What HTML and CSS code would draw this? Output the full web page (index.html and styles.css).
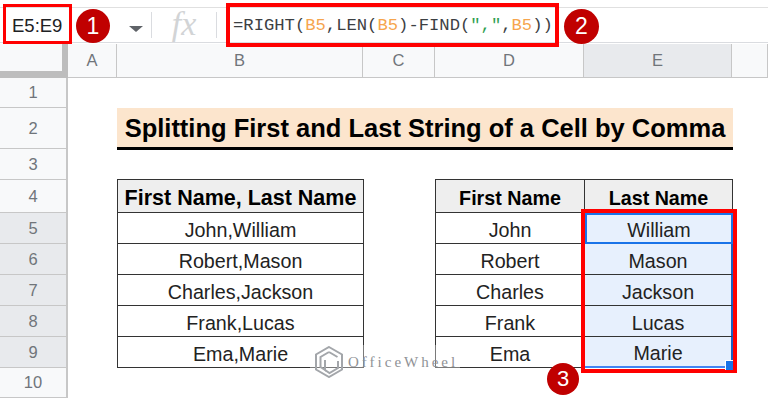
FILE: index.html
```html
<!DOCTYPE html>
<html lang="en">
<head>
    <meta charset="UTF-8">
    <meta name="viewport" content="width=device-width, initial-scale=1.0">
    <title>Splitting First and Last String of a Cell by Comma</title>
    <link rel="stylesheet" href="styles.css">
</head>
<body>
    <div class="formula-bar">
        <div class="name-box">E5:E9</div>
        <div class="name-arrow"></div>
        <div class="fx-box"><span class="fx">fx</span></div>
        <div class="formula">=RIGHT(<span class="ref">B5</span>,LEN(<span class="ref">B5</span>)-FIND(<span class="str">","</span>,<span class="ref">B5</span>))</div>
    </div>

    <div class="sheet">
        <div class="corner"></div>
        <div class="col-head">A</div>
        <div class="col-head">B</div>
        <div class="col-head">C</div>
        <div class="col-head">D</div>
        <div class="col-head active">E</div>
        <div class="col-head"></div>

        <div class="row-head r1">1</div>
        <div class="row-head r2">2</div>
        <div class="row-head r3">3</div>
        <div class="row-head r4">4</div>
        <div class="row-head r5 active">5</div>
        <div class="row-head r6 active">6</div>
        <div class="row-head r7 active">7</div>
        <div class="row-head r8 active">8</div>
        <div class="row-head r9 active">9</div>
        <div class="row-head r10">10</div>

        <div class="title">Splitting First and Last String of a Cell by Comma</div>

        <div class="table table-left">
            <div class="cell head wide">First Name, Last Name</div>
            <div class="cell">John,William</div>
            <div class="cell">Robert,Mason</div>
            <div class="cell">Charles,Jackson</div>
            <div class="cell">Frank,Lucas</div>
            <div class="cell">Ema,Marie</div>
        </div>

        <div class="table table-right">
            <div class="cell head">First Name</div>
            <div class="cell head">Last Name</div>
            <div class="cell">John</div>
            <div class="cell sel first">William</div>
            <div class="cell">Robert</div>
            <div class="cell sel">Mason</div>
            <div class="cell">Charles</div>
            <div class="cell sel">Jackson</div>
            <div class="cell">Frank</div>
            <div class="cell sel">Lucas</div>
            <div class="cell">Ema</div>
            <div class="cell sel last">Marie</div>
        </div>
    </div>

    <!-- annotations on top of the screenshot -->
    <div class="mark mark-name"></div>
    <div class="mark mark-formula"></div>
    <div class="mark mark-range"></div>
    <div class="handle"></div>
    <div class="badge badge-1">1</div>
    <div class="badge badge-2">2</div>
    <div class="badge badge-3">3</div>

    <div class="watermark">
        <svg class="wm-logo" width="30" height="32" viewBox="0 0 30 32" fill="none" stroke="#a3a6aa" stroke-width="2">
            <path d="M15 1 L28 8.5 V23.500 L15 31 L2 23.500 V8.500 Z"/>
            <path d="M15 6 L23.500 11 M15 6 L6.500 11 V21 L11 24 V14"/>
            <path d="M24 15 V22 L15.500 27 L11 24"/>
        </svg>
        <span class="wm-text">OfficeWheel</span>
    </div>
</body>
</html>
```

FILE: styles.css
```css
* {
    margin: 0;
    padding: 0;
    box-sizing: border-box;
}

body {
    width: 768px;
    height: 402px;
    position: relative;
    overflow: hidden;
    background: #fff;
    font-family: 'Liberation Sans', Arial, sans-serif;
    color: #202124;
}

/* formula bar */
.formula-bar {
    height: 36px;
    margin: 7px 0 1px;
    display: flex;
    align-items: stretch;
    border-top: 1px solid #e0e0e0;
    border-bottom: 1px solid #dadce0;
}

.name-box {
    width: 68px;
    margin-left: 3px;
    padding-left: 9px;
    font-size: 18.500px;
    line-height: 36px;
    white-space: nowrap;
}

.name-arrow {
    width: 0;
    height: 0;
    margin: 18px 0 0 58px;
    border-left: 7px solid transparent;
    border-right: 7px solid transparent;
    border-top: 6px solid #5f6368;
}

.fx-box {
    width: 66px;
    height: 26px;
    margin: 4px 0 0 8px;
    border-left: 1px solid #dadce0;
    border-right: 1px solid #dadce0;
    text-align: center;
}

.fx {
    font-family: 'Liberation Serif', serif;
    font-style: italic;
    font-size: 34px;
    line-height: 24px;
    color: #d2d4d6;
}

.formula {
    flex: 1;
    margin-left: 9px;
    padding-left: 7px;
    font-family: 'Liberation Mono', monospace;
    font-size: 17.200px;
    line-height: 36px;
    color: #3c4043;
    white-space: nowrap;
}

.ref { color: #f6a54e; }
.str { color: #2e9e50; }

/* grid */
.sheet {
    display: grid;
    grid-template-columns: 68px 49px 246px 72px 149px 148px 36px;
    grid-template-rows: 34px 30px 41px 31px 33px 31px 31px 31px 31px 31px 30px;
    height: 358px;
}

.corner {
    background: #f8f9fa;
    border-right: 6px solid #bdbdbd;
    border-bottom: 7px solid #bdbdbd;
}

.col-head,
.row-head {
    background: #f8f9fa;
    color: #70757a;
    display: flex;
    align-items: center;
    justify-content: center;
    font-size: 16.500px;
}

.col-head {
    border-right: 1px solid #c7c7c7;
    border-bottom: 1px solid #c7c7c7;
}

.row-head {
    grid-column: 1;
    border-right: 2px solid #c7c7c7;
    border-bottom: 1px solid #c7c7c7;
}

.col-head.active,
.row-head.active { background: #e8eaed; }

.r1 { grid-row: 2; }
.r2 { grid-row: 3; }
.r3 { grid-row: 4; }
.r4 { grid-row: 5; }
.r5 { grid-row: 6; }
.r6 { grid-row: 7; }
.r7 { grid-row: 8; }
.r8 { grid-row: 9; }
.r9 { grid-row: 10; }
.r10 { grid-row: 11; }

.title {
    grid-column: 3 / 7;
    grid-row: 3;
    height: 42px;
    margin-right: -1px;
    background: #fce5cd;
    border-bottom: 3px solid #000;
    color: #000;
    font-weight: bold;
    font-size: 25.500px;
    line-height: 41px;
    text-align: center;
    white-space: nowrap;
}

.table {
    display: grid;
    grid-template-rows: 33px repeat(5, 31px);
    grid-row: 5 / 11;
    border-left: 1px solid #333;
    border-top: 1px solid #333;
    margin-top: -1px;
    margin-right: -1px;
    color: #222;
}

.table-left {
    grid-column: 3;
    grid-template-columns: 1fr;
}

.table-right {
    grid-column: 5 / 7;
    grid-template-columns: 149px 148px;
}

.cell {
    display: flex;
    align-items: center;
    justify-content: center;
    padding-top: 4px;
    font-size: 19.700px;
    border-right: 1px solid #333;
    border-bottom: 1px solid #333;
    white-space: nowrap;
}

.cell.head {
    background: #eeeeee;
    color: #000;
    font-weight: bold;
    font-size: 19.700px;
}

.cell.wide { font-size: 21.500px; }

.cell.sel {
    background: #e7f0fd;
    border-right: 2px solid #1a5fc4;
}

.cell.first {
    border: 2px solid #1a73e8;
}

.cell.last {
    border-bottom: 2px solid #4285f4;
}

/* red annotation boxes */
.mark {
    position: absolute;
    border: 3px solid #ff0000;
}

.mark-name { left: 3px; top: 4px; width: 69px; height: 40px; }
.mark-formula { left: 226px; top: 3px; width: 333px; height: 44px; border-width: 4px; }
.mark-range { left: 581px; top: 209px; width: 156px; height: 164px; border-width: 4px; }

.handle {
    position: absolute;
    left: 725px;
    top: 360px;
    width: 8px;
    height: 10px;
    background: #1a73e8;
    border-left: 1px solid #fff;
    border-top: 1px solid #fff;
}

.badge {
    position: absolute;
    display: flex;
    align-items: center;
    justify-content: center;
    border-radius: 50%;
    background: #c00000;
    color: #fff;
}

.badge-1 { left: 76px; top: 9px; width: 34px; height: 34px; font-size: 23px; }
.badge-2 { left: 564px; top: 9px; width: 35px; height: 35px; font-size: 23px; }
.badge-3 { left: 547px; top: 363px; width: 32px; height: 32px; font-size: 22px; }

/* watermark */
.watermark {
    position: absolute;
    left: 310px;
    top: 345px;
    width: 150px;
    height: 34px;
    display: flex;
    align-items: center;
    background: rgba(255, 255, 255, 0.35);
}

.wm-logo { margin-left: 4px; }

.wm-text {
    margin-left: 4px;
    font-family: 'Liberation Serif', serif;
    font-size: 15px;
    letter-spacing: 3px;
    color: #8f9296;
}
```
